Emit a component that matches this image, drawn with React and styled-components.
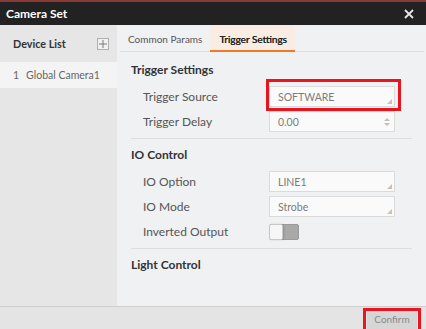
import React from "react";
import styled, { createGlobalStyle } from "styled-components";

const Global = createGlobalStyle`
  html, body { margin: 0; padding: 0; background: #f0f1f3; }
  body { font-family: Lato, "Open Sans", sans-serif; }
  * { box-sizing: border-box; }
`;

const Window = styled.div`
  width: 426px;
  height: 329px;
  display: flex;
  flex-direction: column;
  overflow: hidden;
`;

const TitleBar = styled.div`
  height: 25px;
  flex: none;
  background: #222222;
  border-top: 2px solid #8a3a34;
  display: flex;
  align-items: center;
  justify-content: space-between;
  padding: 0 12px 0 6px;
  color: #ffffff;
  font-weight: 700;
  font-size: 12px;
`;

const CloseIcon = styled.svg`
  width: 10px;
  height: 10px;
  display: block;
`;

const Body = styled.div`
  flex: 1;
  display: flex;
  min-height: 0;
`;

const Sidebar = styled.div`
  width: 117px;
  flex: none;
  background: #e6e6e6;
`;

const SideHeader = styled.div`
  height: 37px;
  display: flex;
  align-items: center;
  justify-content: space-between;
  padding: 0 8px 0 13px;
  font-weight: 700;
  font-size: 10.8px;
  color: #333;
`;

const PlusBox = styled.div`
  width: 12px;
  height: 12px;
  border: 1px solid #b0b0b0;
  background: #f0f0f0;
  display: flex;
  align-items: center;
  justify-content: center;
`;

const DeviceItem = styled.div`
  height: 26px;
  display: flex;
  align-items: center;
  padding-left: 13px;
  gap: 7px;
  background: ${(p) => (p.$active ? "#f4f4f4" : "transparent")};
  color: #666;
  font-size: 10.5px;
`;

const Main = styled.div`
  flex: 1;
  background: #f0f1f3;
  padding: 0 2px 0 3px;
  display: flex;
  flex-direction: column;
`;

const TabBar = styled.div`
  height: 27px;
  flex: none;
  display: flex;
  border-bottom: 1px solid #dcdcdc;
`;

const Tab = styled.div`
  flex: none;
  white-space: nowrap;
  display: flex;
  align-items: center;
  padding: 2px 8px 0 ${(p) => (p.$active ? 9 : 8)}px;
  font-size: 10px;
  color: ${(p) => (p.$active ? "#222" : "#555")};
  font-weight: 400;
  text-shadow: ${(p) => (p.$active ? "0.3px 0 0 #222" : "none")};
  background: ${(p) => (p.$active ? "#f8ece3" : "transparent")};
  border-bottom: 2px solid ${(p) => (p.$active ? "#f07a2a" : "transparent")};
  margin-bottom: -1px;
`;

const Content = styled.div`
  padding: 2px 12px 0 11px;
`;

const Section = styled.div`
  padding: 6px 0 4px;
  border-bottom: ${(p) => (p.$last ? "none" : "1px solid #dedede")};
`;

const Heading = styled.div`
  height: 20px;
  line-height: 20px;
  font-weight: 700;
  font-size: 12px;
  color: #333;
`;

const Rows = styled.div`
  margin-top: 4px;
  padding-left: 12px;
  display: grid;
  grid-template-columns: 126px 126px;
  grid-auto-rows: 25px;
  align-items: center;
`;

const Label = styled.div`
  font-size: 12px;
  color: #555;
`;

const FieldWrap = styled.div`
  position: relative;
  height: 21px;
`;

const Highlight = styled.div`
  position: absolute;
  left: -3px;
  top: -7px;
  right: -6px;
  bottom: -4px;
  border: 3px solid #e8141e;
  pointer-events: none;
`;

const Field = styled.div`
  height: 21px;
  border: 1px solid #dadada;
  background: #fafafa;
  display: flex;
  align-items: center;
  justify-content: space-between;
  padding: 0 4px 0 8px;
  font-size: 10.5px;
  color: #7a7a7a;
  position: relative;
`;

const Corner = styled.span`
  position: absolute;
  right: 2px;
  bottom: 2px;
  width: 0;
  height: 0;
  border-left: 5px solid transparent;
  border-bottom: 5px solid #cdbfb2;
`;

const Spin = styled.svg`
  width: 6px;
  height: 10px;
  display: block;
`;

const Toggle = styled.div`
  width: 30px;
  height: 16px;
  border-radius: 2px;
  background: #a9a9a9;
  position: relative;
  border: 1px solid #9a9a9a;
`;

const Knob = styled.div`
  position: absolute;
  left: -1px;
  top: -1px;
  width: 14px;
  height: 16px;
  border-radius: 2px;
  background: #f6f6f6;
  border: 1px solid #c8c8c8;
  box-shadow: 1px 0 2px rgba(0, 0, 0, 0.15);
`;

const Footer = styled.div`
  height: 23px;
  flex: none;
  background: #e4e4e4;
  border-top: 1px solid #cfcfcf;
  display: flex;
  justify-content: flex-end;
  align-items: flex-end;
  padding-right: 5px;
`;

const ConfirmWrap = styled.div`
  border: 3px solid #e8141e;
  border-bottom: none;
  padding: 0 1px;
  height: 21px;
  display: flex;
  align-items: stretch;
`;

const ConfirmBtn = styled.div`
  width: 50px;
  background: #d6d6d6;
  color: #8a8a8a;
  font-size: 10px;
  line-height: 16px;
  text-align: center;
`;

function Select({ value, highlight }) {
  return (
    <FieldWrap>
      <Field>
        {value}
        <Corner />
      </Field>
      {highlight && <Highlight />}
    </FieldWrap>
  );
}

export default function App() {
  return (
    <>
      <Global />
      <Window>
        <TitleBar>
          <span>Camera Set</span>
          <CloseIcon viewBox="0 0 10 10">
            <path d="M1 1L9 9M9 1L1 9" stroke="#e6e6e6" strokeWidth="1.8" />
          </CloseIcon>
        </TitleBar>
        <Body>
          <Sidebar>
            <SideHeader>
              <span>Device List</span>
              <PlusBox>
                <svg width="8" height="8" viewBox="0 0 8 8">
                  <path d="M4 0V8M0 4H8" stroke="#7a7a7a" strokeWidth="1" />
                </svg>
              </PlusBox>
            </SideHeader>
            <DeviceItem $active>
              <span>1</span>
              <span>Global Camera1</span>
            </DeviceItem>
          </Sidebar>
          <Main>
            <TabBar>
              <Tab>Common Params</Tab>
              <Tab $active>Trigger Settings</Tab>
            </TabBar>
            <Content>
              <Section>
                <Heading>Trigger Settings</Heading>
                <Rows>
                  <Label>Trigger Source</Label>
                  <Select value="SOFTWARE" highlight />
                  <Label>Trigger Delay</Label>
                  <FieldWrap>
                    <Field>
                      0.00
                      <Spin viewBox="0 0 6 10">
                        <path d="M0 4L3 1L6 4Z M0 6L3 9L6 6Z" fill="#c9bcb0" />
                      </Spin>
                    </Field>
                  </FieldWrap>
                </Rows>
              </Section>
              <Section>
                <Heading>IO Control</Heading>
                <Rows>
                  <Label>IO Option</Label>
                  <Select value="LINE1" />
                  <Label>IO Mode</Label>
                  <Select value="Strobe" />
                  <Label>Inverted Output</Label>
                  <Toggle>
                    <Knob />
                  </Toggle>
                </Rows>
              </Section>
              <Section $last>
                <Heading>Light Control</Heading>
              </Section>
            </Content>
          </Main>
        </Body>
        <Footer>
          <ConfirmWrap>
            <ConfirmBtn>Confirm</ConfirmBtn>
          </ConfirmWrap>
        </Footer>
      </Window>
    </>
  );
}
